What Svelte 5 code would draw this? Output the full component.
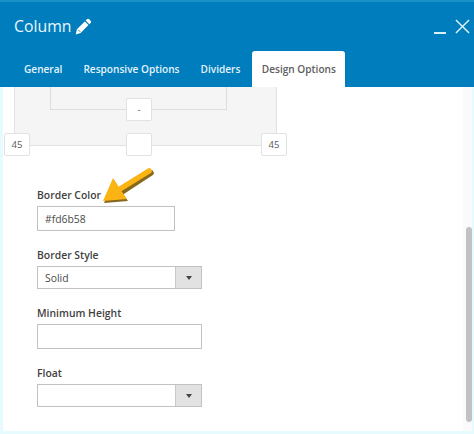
<script>
  // tabs shown in the dialog header, last one is open
  let tabs = [
    { label: 'General', active: false },
    { label: 'Responsive Options', active: false },
    { label: 'Dividers', active: false },
    { label: 'Design Options', active: true }
  ];
</script>

<div class="window">
  <header>
    <div class="titlebar">
      <h1>Column</h1>
      <svg class="pencil" width="17" height="17" viewBox="0 0 16 16">
        <path d="M11.2 1.2 a1.6 1.6 0 0 1 2.2 0 l1.3 1.3 a1.6 1.6 0 0 1 0 2.2 l-1.2 1.2 -3.5 -3.5z M9.2 3.2 l3.5 3.5 -7.4 7.4 -4.6 1.4 1.1 -4.9z" fill="#fff" />
        <path d="M3 11 l2 2" stroke="#007dbd" stroke-width="0.8" />
      </svg>
      <div class="controls">
        <span class="minimize"></span>
        <svg width="15" height="15" viewBox="0 0 16 16">
          <path d="M1 1 L15 15 M15 1 L1 15" stroke="#e4f4fb" stroke-width="1.5" fill="none" />
        </svg>
      </div>
    </div>
    <nav>
      {#each tabs as tab}
        <button class="tab" class:active={tab.active}>{tab.label}</button>
      {/each}
    </nav>
  </header>

  <div class="body">
    <div class="content">
      <div class="box-area">
        <div class="outer">
          <div class="inner"></div>
        </div>
        <span class="small padding-bottom">-</span>
        <span class="small left">45</span>
        <span class="small center"></span>
        <span class="small right">45</span>
      </div>

      <div class="form">
        <div class="field color">
          <label for="border-color">Border Color</label>
          <input id="border-color" class="short" value="#fd6b58" />
        </div>
        <div class="field">
          <label for="border-style">Border Style</label>
          <div class="select" id="border-style">
            <span>Solid</span>
            <i class="caret"></i>
          </div>
        </div>
        <div class="field">
          <label for="min-height">Minimum Height</label>
          <input id="min-height" />
        </div>
        <div class="field">
          <label for="float">Float</label>
          <div class="select" id="float">
            <span></span>
            <i class="caret"></i>
          </div>
        </div>
      </div>

      <svg class="arrow" width="64" height="46" viewBox="0 0 64 46">
        <g fill="#86691f" transform="translate(1 2)">
          <path d="M21 24 L50 5" stroke="#86691f" stroke-width="5.5" stroke-linecap="round" fill="none" />
          <path d="M3 35 L13 12 L20 23 L27 33z" />
        </g>
        <path d="M20 23 L49 5" stroke="#fbb413" stroke-width="5.5" stroke-linecap="round" fill="none" />
        <path d="M3 35 L13 12 L20 23 L27 33z" fill="#fbb413" />
      </svg>
    </div>

    <div class="scrollbar"><div class="thumb"></div></div>
  </div>
</div>

<style>
  :global(body) {
    margin: 0;
    background: #e6fbfd;
  }

  .window {
    width: 474px;
    height: 434px;
    box-sizing: border-box;
    padding-bottom: 3px;
    display: flex;
    flex-direction: column;
    font-family: "Open Sans", sans-serif;
    color: #414141;
    overflow: hidden;
  }

  header {
    height: 87px;
    flex: none;
    background: #007dbd;
    border-top: 2px solid #1a90c8;
    box-sizing: border-box;
    display: flex;
    flex-direction: column;
    justify-content: space-between;
  }

  .titlebar {
    display: flex;
    align-items: center;
    padding: 14px 4px 0 14px;
    height: 20px;
  }

  h1 {
    margin: 0;
    font-size: 15.8px;
    font-weight: 400;
    color: #e8f6fc;
  }

  .pencil {
    margin-left: 4px;
  }

  .controls {
    margin-left: auto;
    display: flex;
    align-items: flex-end;
    gap: 9px;
  }

  .minimize {
    width: 12px;
    height: 2px;
    background: #d8eff9;
  }

  nav {
    display: flex;
    align-items: stretch;
    height: 36px;
    padding-left: 15px;
  }

  .tab {
    border: 0;
    background: none;
    padding: 0 9px;
    margin-right: 3px;
    font: 600 10.1px "Open Sans", sans-serif;
    color: #e3f3fb;
  }

  .tab.active {
    background: #fff;
    color: #5d5d5d;
    border-radius: 3px 3px 0 0;
    width: 93px;
    padding: 0;
    margin: 0;
  }

  .body {
    flex: 1;
    min-height: 0;
    margin: 0 2px 0 3px;
    background: #fff;
    display: flex;
  }

  .content {
    flex: 1;
    position: relative;
  }

  .box-area {
    position: relative;
    height: 68px;
  }

  .outer {
    box-sizing: border-box;
    margin-left: 11px;
    width: 263px;
    height: 59px;
    background: #f5f5f5;
    border: 1px solid #e2e2e2;
    border-top: 0;
  }

  .inner {
    box-sizing: border-box;
    margin-left: 35px;
    width: 177px;
    height: 23px;
    border: 1px solid #dedede;
    border-top: 0;
  }

  .small {
    position: absolute;
    box-sizing: border-box;
    width: 26px;
    height: 23px;
    background: #fff;
    border: 1px solid #e2e2e2;
    border-radius: 2px;
    font-size: 9.5px;
    line-height: 21px;
    text-align: center;
    color: #5a5a5a;
  }

  .padding-bottom { left: 123px; top: 11px; }
  .left { left: 1px; top: 46px; }
  .center { left: 123px; top: 46px; }
  .right { left: 258px; top: 46px; }

  .form {
    padding: 33px 0 0 34px;
    display: flex;
    flex-direction: column;
  }

  .field {
    display: flex;
    flex-direction: column;
    margin-bottom: 17px;
  }

  .field label {
    font-size: 10.4px;
    font-weight: 600;
    line-height: 15px;
    margin-bottom: 3px;
    color: #3f3f3f;
  }

  input {
    box-sizing: border-box;
    width: 165px;
    height: 25px;
    border: 1px solid #c2c2c2;
    padding: 0 7px;
    font: 400 10.4px "Open Sans", sans-serif;
    color: #4a4a4a;
    background: #fff;
    outline: none;
  }

  input.short {
    width: 138px;
  }

  .select {
    box-sizing: border-box;
    width: 165px;
    height: 23px;
    border: 1px solid #c2c2c2;
    display: flex;
    align-items: center;
    justify-content: space-between;
    font-size: 10.4px;
    color: #4a4a4a;
  }

  .select span {
    padding-left: 7px;
  }

  .caret {
    width: 25px;
    height: 100%;
    background: #e2e2e2;
    border-left: 1px solid #c8c8c8;
    display: flex;
    align-items: center;
    justify-content: center;
  }

  .caret::after {
    content: "";
    border: 3px solid transparent;
    border-top: 4px solid #444;
    border-bottom: 0;
  }

  .arrow {
    position: absolute;
    left: 97px;
    top: 79px;
  }

  .scrollbar {
    width: 9px;
    flex: none;
    background: #fafafa;
    box-sizing: border-box;
    padding: 140px 0 9px 3px;
  }

  .thumb {
    height: 100%;
    background: #c2c2c2;
    border-radius: 3px;
  }
</style>
